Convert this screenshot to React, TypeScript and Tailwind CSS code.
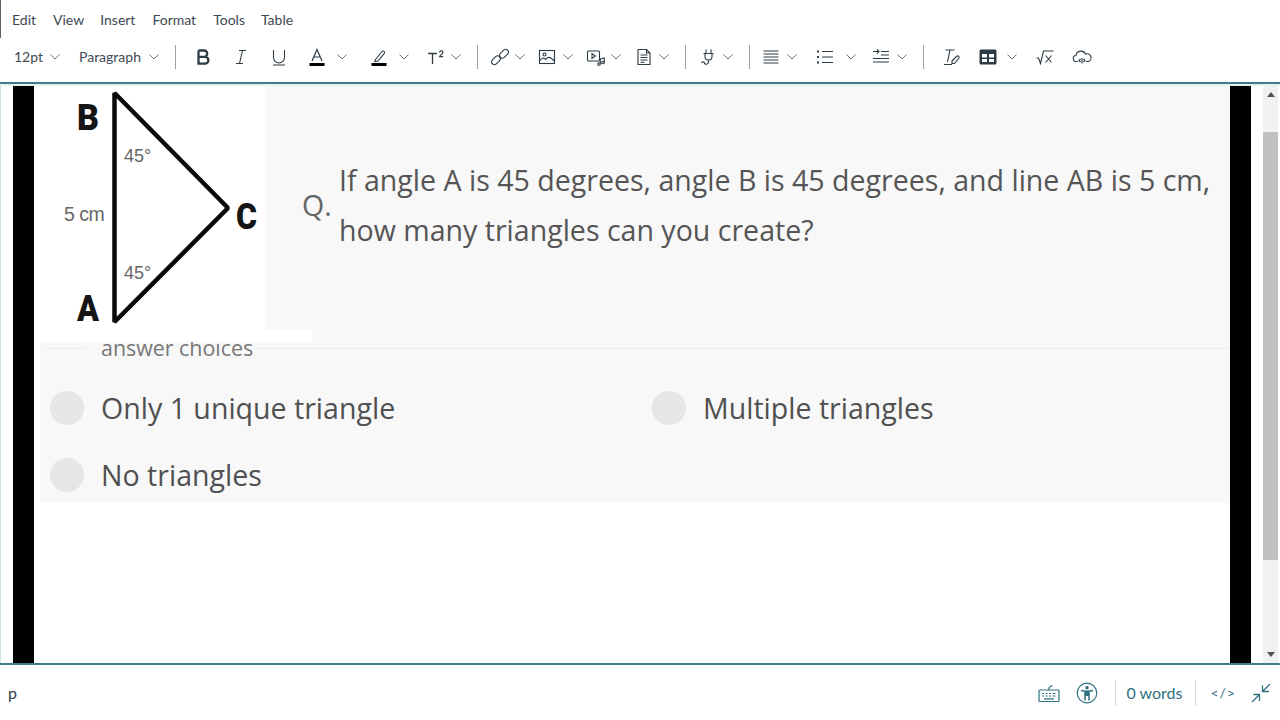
import type { ReactNode } from 'react'

const Chevron = ({ className }: { className: string }) => (
    <svg viewBox="0 0 10 6" className={`w-[10px] h-[6px] shrink-0 ${className}`} fill="none" stroke="#6b7780" strokeWidth="1">
        <path d="M0.5 0.5 5 5 9.5 0.5" />
    </svg>
)

const Divider = ({ className }: { className: string }) => <div className={`w-px h-[24px] bg-[#9aa0a5] shrink-0 ${className}`} />

const Icon = ({ className, children }: { className: string; children: ReactNode }) => (
    <svg viewBox="0 0 20 20" className={`w-[20px] h-[20px] shrink-0 ${className}`} fill="none" stroke="#2d3b45" strokeWidth="1.1">
        {children}
    </svg>
)

const Option = ({ label }: { label: string }) => (
    <div className="flex items-center gap-[17px] h-[67px]">
        <div className="w-[34px] h-[34px] rounded-full bg-[#e6e6e6] shrink-0" />
        <span className="mt-[2px]">{label}</span>
    </div>
)

export default function App() {
    return (
        <div className="w-[1280px] h-[720px] flex flex-col bg-white overflow-hidden font-['Lato',sans-serif] text-[#2d3b45]">
            <div className="h-[38px] shrink-0 flex items-center pl-[12px] pt-[1px] text-[14px] text-[#3d4a54] border-l border-[#5a6268]">
                <span className="-ml-px">Edit</span>
                <span className="ml-[17px]">View</span>
                <span className="ml-[16px]">Insert</span>
                <span className="ml-[17px]">Format</span>
                <span className="ml-[17px]">Tools</span>
                <span className="ml-[16px]">Table</span>
            </div>

            <div className="h-[44px] shrink-0 flex items-center pl-[14px] pb-[7px] text-[14px] text-[#3d4a54]">
                <span className="w-[30px]">12pt</span>
                <Chevron className="ml-[6px]" />
                <span className="ml-[19px] w-[64px]">Paragraph</span>
                <Chevron className="ml-[6px]" />
                <Divider className="ml-[16px]" />
                <Icon className="ml-[17px]">
                    <path d="M5.5 3.500h5.500a3.200 3.200 0 0 1 0 6.400H5.500M5.500 9.900h6.500a3.400 3.400 0 0 1 0 6.800H5.500V3.500Z" strokeWidth="2.300" />
                </Icon>
                <Icon className="ml-[18px]">
                    <path d="M8 3.500h7M5 16.500h7M11.500 3.500 8.500 16.500" />
                </Icon>
                <Icon className="ml-[18px]">
                    <path d="M4.500 3v7.500a5.500 5.500 0 0 0 11 0V3M4 18h12" />
                </Icon>
                <svg viewBox="0 0 20 20" className="w-[20px] h-[20px] shrink-0 ml-[18px]" fill="none" stroke="#2d3b45" strokeWidth="1.200">
                    <path d="M5 14 10 2.500 15 14M6.700 10h6.600" />
                    <rect x="2.500" y="16" width="15" height="3" fill="#000000" stroke="none" />
                </svg>
                <Chevron className="ml-[10px]" />
                <svg viewBox="0 0 20 20" className="w-[20px] h-[20px] shrink-0 ml-[22px]" fill="none" stroke="#2d3b45" strokeWidth="1.100">
                    <path d="M6.500 12.500 13 4.500a1.500 1.500 0 0 1 2.300 1.900L9 14l-3.200 0.500Z" />
                    <rect x="2.500" y="16" width="15" height="3" fill="#000000" stroke="none" />
                </svg>
                <Chevron className="ml-[10px]" />
                <Icon className="ml-[17px]">
                    <path d="M2 6.500h9M6.500 6.500V17" strokeWidth="1.300" />
                    <path d="M13.500 5.500a1.700 1.700 0 0 1 3.400 0c0 1.500-3.400 2.700-3.400 4.200h3.600" strokeWidth="1.200" />
                </Icon>
                <Chevron className="ml-[5px]" />
                <Divider className="ml-[16px]" />
                <Icon className="ml-[12px]">
                    <rect x="1" y="10.500" width="10" height="5.500" rx="2.700" transform="rotate(-45 6 13.250)" />
                    <rect x="9" y="4" width="10" height="5.500" rx="2.700" transform="rotate(-45 14 6.750)" />
                </Icon>
                <Chevron className="ml-[5px]" />
                <Icon className="ml-[12px]">
                    <rect x="2.500" y="3.500" width="15" height="13" />
                    <circle cx="7.500" cy="7.500" r="1.500" />
                    <path d="M2.500 14c2-3.500 4.500-3.500 6-1.500 1.500-2 4-2.500 6-1 1 0.700 2 1.500 3 2.500" />
                </Icon>
                <Chevron className="ml-[6px]" />
                <Icon className="ml-[13px]">
                    <rect x="1.500" y="4" width="12" height="10" rx="1" />
                    <path d="M6 6.500v5l3.500-2.500Z" />
                    <circle cx="13" cy="17" r="1.300" />
                    <circle cx="17" cy="15.500" r="1.300" />
                    <path d="M14.300 17v-5l4-1v4.500" />
                </Icon>
                <Chevron className="ml-[5px]" />
                <Icon className="ml-[13px]">
                    <path d="M4 2.500h8.500l3.500 3.500v11.500H4ZM12.500 2.500V6H16M6.500 8h7M6.500 10.500h7M6.500 13h7M6.500 15.300h4" />
                </Icon>
                <Chevron className="ml-[5px]" />
                <Divider className="ml-[16px]" />
                <Icon className="ml-[12px]">
                    <path d="M8 2.500v4M13 2.500v4M5.500 6.500h10M7 6.500v3a3.500 3.500 0 0 0 7 0v-3M10.500 13v2c0 2.500-3.500 3-4 1-0.300-1.500-2-1.500-3 0" />
                </Icon>
                <Chevron className="ml-[5px]" />
                <Divider className="ml-[16px]" />
                <Icon className="ml-[11px]">
                    <path d="M2.500 4h15M2.500 7h15M2.500 10h15M2.500 13h15M2.500 16h15" />
                </Icon>
                <Chevron className="ml-[6px]" />
                <svg viewBox="0 0 20 20" className="w-[20px] h-[20px] shrink-0 ml-[18px]" fill="none" stroke="#2d3b45" strokeWidth="1.100">
                    <path d="M7 4.500h11M7 10h11M7 15.500h11" />
                    <rect x="2" y="3.500" width="2" height="2" fill="#2d3b45" stroke="none" />
                    <rect x="2" y="9" width="2" height="2" fill="#2d3b45" stroke="none" />
                    <rect x="2" y="14.500" width="2" height="2" fill="#2d3b45" stroke="none" />
                </svg>
                <Chevron className="ml-[11px]" />
                <Icon className="ml-[15px]">
                    <path d="M2 4.500h6M6 2.500l2 2-2 2M10 4.500h8M10 8h8M2 11.500h16M2 15h16" />
                </Icon>
                <Chevron className="ml-[6px]" />
                <Divider className="ml-[16px]" />
                <Icon className="ml-[17px]">
                    <path d="M4.500 3h9M9 3 6.500 15M3 17.500h8" />
                    <path d="M11 14l5-5a1.500 1.500 0 0 1 2 2l-4.500 5.500H11Z" />
                </Icon>
                <svg viewBox="0 0 20 20" className="w-[20px] h-[20px] shrink-0 ml-[17px]">
                    <path d="M3 2.500h14A1.500 1.500 0 0 1 18.500 4v12a1.500 1.500 0 0 1-1.500 1.500H3A1.500 1.500 0 0 1 1.500 16V4A1.500 1.500 0 0 1 3 2.500ZM4 7v3.500h5V7Zm7 0v3.500h5V7ZM4 12v3h5v-3Zm7 0v3h5v-3Z" fill="#2d3b45" fillRule="evenodd" />
                </svg>
                <Chevron className="ml-[9px]" />
                <Icon className="ml-[18px]">
                    <path d="M1.500 11h2l2 5.500L8.500 4h10M10.500 8.500l6 7M16.500 8.500l-6 7" />
                </Icon>
                <Icon className="ml-[17px]">
                    <path d="M6 14.500H4.500a3 3 0 0 1-0.500-6 5 5 0 0 1 9.500-1.500 3.800 3.800 0 0 1 3 7.500H14" />
                    <path d="M8.500 12 7 13.500 8.500 15M11.500 12l1.500 1.500-1.500 1.500M10 16.500V11" />
                </Icon>
            </div>

            <div className="h-[583px] shrink-0 flex flex-col border-y-2 border-[#3f7d8c] overflow-hidden">
                <div className="h-[2px] shrink-0 bg-[#e4f1f4]" />
                <div className="flex-1 min-h-0 flex">
                    <div className="w-[13px] shrink-0 border-l border-[#cfe3ea]" />
                    <div className="w-[21px] shrink-0 bg-black" />
                    <div className="w-[1196px] shrink-0 flex flex-col font-['Open_Sans',sans-serif] text-[#4a4a4a]">
                        <div className="h-[244px] flex shrink-0 bg-[#f8f8f8]">
                            <div className="w-[232px] h-full shrink-0 bg-white">
                                <svg viewBox="0 0 232 244" className="w-[232px] h-[244px]">
                                    <path d="M80.500 7V236L194 122Z" fill="none" stroke="#0a0a0a" strokeWidth="4.500" strokeLinejoin="bevel" />
                                    <text x="43" y="44" fontFamily="Roboto" fontWeight="900" fontSize="36" textLength="22" lengthAdjust="spacingAndGlyphs" fill="#151515">B</text>
                                    <text x="202" y="143" fontFamily="Roboto" fontWeight="900" fontSize="36" textLength="21" lengthAdjust="spacingAndGlyphs" fill="#151515">C</text>
                                    <text x="43" y="235" fontFamily="Roboto" fontWeight="900" fontSize="36" textLength="22" lengthAdjust="spacingAndGlyphs" fill="#151515">A</text>
                                    <text x="30" y="135" fontFamily="Liberation Sans" fontSize="19.500" letterSpacing="-0.500" fill="#666666">5 cm</text>
                                    <text x="90" y="76" fontFamily="Liberation Sans" fontSize="18" fill="#666666">45°</text>
                                    <text x="90" y="193" fontFamily="Liberation Sans" fontSize="18" fill="#666666">45°</text>
                                </svg>
                            </div>
                            <div className="pl-[36px] pt-[94px] text-[28.5px] leading-[50px] text-[#666666] w-[73px] shrink-0">Q.</div>
                            <div className="pt-[69px] text-[28.55px] leading-[50px] whitespace-nowrap text-[#555555]">
                                <div>If angle A is 45 degrees, angle B is 45 degrees, and line AB is 5 cm,</div>
                                <div>how many triangles can you create?</div>
                            </div>
                        </div>
                        <div className="h-[12px] shrink-0 flex bg-[#f8f8f8] relative z-10">
                            <div className="w-[278px] bg-white" />
                        </div>
                        <div className="h-[161px] ml-[6px] shrink-0 bg-[#f8f8f8] flex flex-col">
                            <div className="h-[16px] shrink-0 flex items-start">
                                <div className="ml-[6px] w-[39px] mt-[6px] shrink-0 border-t border-[#ececec]" />
                                <span className="ml-[16px] w-[155px] shrink-0 -mt-[8px] text-[21.4px] leading-[28px] whitespace-nowrap text-[#777777]">answer choices</span>
                                <div className="flex-1 mt-[6px] border-t border-[#ececec]" />
                            </div>
                            <div className="grid grid-cols-[602px_1fr] auto-rows-[67px] pl-[10px] pt-[16px] text-[28.55px] text-[#505050]">
                                <Option label="Only 1 unique triangle" />
                                <Option label="Multiple triangles" />
                                <Option label="No triangles" />
                            </div>
                        </div>
                    </div>
                    <div className="w-[21px] shrink-0 bg-black" />
                    <div className="w-[12px] shrink-0" />
                    <div className="w-[15px] shrink-0 bg-[#f1f1f1] flex flex-col items-center">
                        <div className="h-[17px] shrink-0 flex items-center justify-center">
                            <div className="w-0 h-0 border-x-[4px] border-x-transparent border-b-[5px] border-b-[#505050]" />
                        </div>
                        <div className="w-full h-[428px] mt-[29px] bg-[#c1c1c1] shrink-0" />
                        <div className="mt-auto h-[17px] shrink-0 flex items-center justify-center">
                            <div className="w-0 h-0 border-x-[4px] border-x-transparent border-t-[5px] border-t-[#505050]" />
                        </div>
                    </div>
                    <div className="w-[2px] shrink-0" />
                </div>
            </div>

            <div className="flex-1 flex items-center pl-[8px] text-[#2f6f80]">
                <span className="text-[16px] text-[#2d3b45] mr-auto">p</span>
                <svg viewBox="0 0 22 20" className="w-[22px] h-[20px] shrink-0" fill="none" stroke="#2f6f80" strokeWidth="1.200">
                    <rect x="1" y="7" width="20" height="11.500" rx="1" />
                    <path d="M11 7V5c0-1.500 3-1 3-3M4 10.500h2M7.500 10.500h2M11 10.500h2M14.500 10.500h3M4 13h2M7.500 13h2M11 13h2M14.500 13h3M6 15.800h10" />
                </svg>
                <svg viewBox="0 0 22 22" className="w-[22px] h-[22px] shrink-0 ml-[16px]" fill="none" stroke="#2f6f80" strokeWidth="1.200">
                    <circle cx="11" cy="11" r="9.800" />
                    <circle cx="11" cy="5.800" r="1.700" fill="#2f6f80" stroke="none" />
                    <path d="M5 8.500c4 1 8 1 12 0M9 9.500v9M13 9.500v9" strokeWidth="1.500" />
                    <path d="M9 9h4v5H9Z" fill="#2f6f80" stroke="none" />
                </svg>
                <div className="w-px h-[26px] bg-[#d5dadd] ml-[17px] shrink-0" />
                <span className="ml-[10px] text-[16px] whitespace-nowrap">0 words</span>
                <div className="w-px h-[26px] bg-[#d5dadd] ml-[13px] shrink-0" />
                <span className="ml-[14px] text-[14px] tracking-[1px] whitespace-nowrap">&lt;/&gt;</span>
                <svg viewBox="0 0 20 20" className="w-[20px] h-[20px] shrink-0 ml-[15px] mr-[9px]" fill="none" stroke="#2f6f80" strokeWidth="1.300">
                    <path d="M19 1l-7.500 7.500M11.500 2.500v6h6.500M1 19l7.500-7.500M2.500 11.500h6v6.500" />
                </svg>
            </div>
        </div>
    )
}
